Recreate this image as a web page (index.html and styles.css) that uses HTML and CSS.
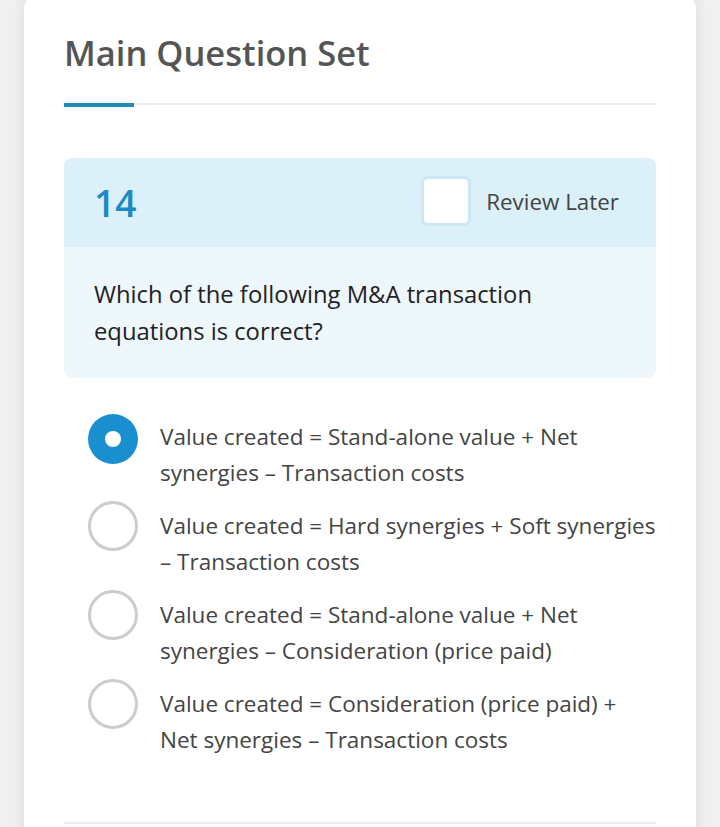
FILE: index.html
```html
<!DOCTYPE html>
<html>
<head>
<meta charset="utf-8">
<link rel="stylesheet" href="styles.css">
</head>
<body>
<div class="card">
  <h1 class="title">Main Question Set</h1>
  <div class="divider"><span class="divider-accent"></span><span class="divider-line"></span></div>
  <div class="question">
    <div class="question-head">
      <span class="question-num">14</span>
      <label class="review">
        <span class="checkbox"></span>
        <span class="review-text">Review Later</span>
      </label>
    </div>
    <div class="question-body">Which of the following M&amp;A transaction equations is correct?</div>
  </div>
  <ul class="options">
    <li class="option">
      <span class="radio radio-selected"><span class="radio-dot"></span></span>
      <span class="option-text">Value created = Stand-alone value + Net synergies – Transaction costs</span>
    </li>
    <li class="option">
      <span class="radio"></span>
      <span class="option-text">Value created = Hard synergies + Soft synergies – Transaction costs</span>
    </li>
    <li class="option">
      <span class="radio"></span>
      <span class="option-text">Value created = Stand-alone value + Net synergies – Consideration (price paid)</span>
    </li>
    <li class="option">
      <span class="radio"></span>
      <span class="option-text">Value created = Consideration (price paid) + Net synergies – Transaction costs</span>
    </li>
  </ul>
  <div class="bottom-line"></div>
</div>
</body>
</html>
```
FILE: styles.css
```css
html, body {
  margin: 0;
  padding: 0;
  background: #f0f0f0;
  font-family: "Open Sans", "Noto Sans", sans-serif;
  overflow: hidden;
}

.card {
  box-sizing: border-box;
  width: 672px;
  margin: -4px 24px 0;
  padding: 34px 40px 40px;
  background: #ffffff;
  border-radius: 12px;
  box-shadow: 0 0 14px rgba(0, 0, 0, 0.09);
}

.title {
  margin: 0;
  font-size: 34.5px;
  line-height: 46px;
  font-weight: 600;
  color: #555555;
}

.divider {
  display: flex;
  align-items: flex-start;
  margin-top: 27px;
}

.divider-accent {
  width: 70px;
  height: 4px;
  background: #1e8bb8;
}

.divider-line {
  flex: 1;
  height: 2px;
  background: #eeeeee;
}

.question {
  margin-top: 51px;
  border-radius: 8px;
  overflow: hidden;
}

.question-head {
  display: flex;
  align-items: center;
  justify-content: space-between;
  height: 89px;
  padding: 0 37px 0 30px;
  background: #dcf0f9;
}

.question-num {
  font-size: 37px;
  font-weight: 600;
  color: #1a8bc4;
  line-height: 1;
}

.review {
  display: flex;
  align-items: center;
  gap: 15px;
  margin-top: -3px;
}

.checkbox {
  box-sizing: border-box;
  width: 50px;
  height: 50px;
  border: 3px solid #cbe7f3;
  border-radius: 7px;
  background: #ffffff;
}

.review-text {
  font-size: 22.4px;
  color: #444444;
}

.question-body {
  padding: 29px 42px 28px 30px;
  background: #eef7fc;
  font-size: 23.8px;
  line-height: 37px;
  color: #222222;
}

.options {
  list-style: none;
  margin: 41px -2px 0 0;
  padding: 0 0 0 24px;
  display: flex;
  flex-direction: column;
  gap: 17px;
}

.option {
  display: flex;
  align-items: flex-start;
  gap: 22px;
}

.radio {
  box-sizing: border-box;
  flex: 0 0 50px;
  width: 50px;
  height: 50px;
  margin-top: -7px;
  border: 3px solid #cccccc;
  border-radius: 50%;
  display: flex;
  align-items: center;
  justify-content: center;
}

.radio-selected {
  margin-top: -5px;
  border: none;
  background: #1a8fd0;
}

.radio-dot {
  width: 16px;
  height: 16px;
  border-radius: 50%;
  background: #ffffff;
}

.option-text {
  font-size: 22.5px;
  line-height: 36px;
  color: #444444;
}

.bottom-line {
  margin-top: 64px;
  height: 2px;
  background: #eeeeee;
}
```
